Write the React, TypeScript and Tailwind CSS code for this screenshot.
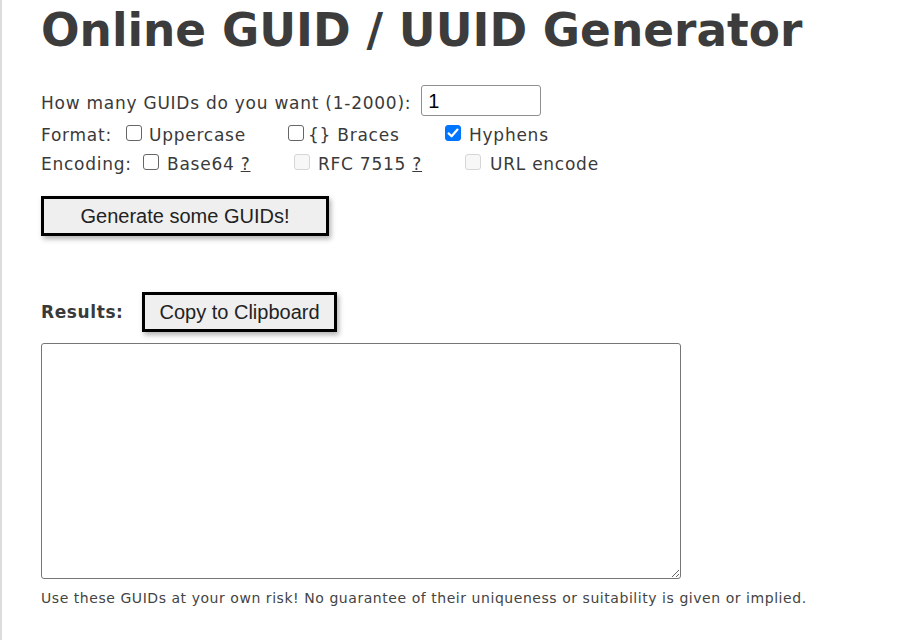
import React, { useState } from "react";

const font = "font-['Verdana','DejaVu_Sans',sans-serif]";

interface BoxProps {
  checked?: boolean;
  disabled?: boolean;
  onChange?: (value: boolean) => void;
  className?: string;
}

const Box: React.FC<BoxProps> = ({ checked = false, disabled = false, onChange, className = "" }) => (
  <span className={`relative inline-flex w-[16px] h-[16px] shrink-0 -mt-[4px] ${className}`}>
    <input
      type="checkbox"
      checked={checked}
      disabled={disabled}
      onChange={(e) => onChange?.(e.target.checked)}
      className={`appearance-none m-0 w-[16px] h-[16px] rounded-[3px] border ${
        disabled
          ? "border-[#d6d6d6] bg-[#f7f7f7]"
          : checked
          ? "border-[#0075ff] bg-[#0075ff]"
          : "border-[#666] bg-white"
      }`}
    />
    {checked && (
      <svg
        viewBox="0 0 16 16"
        className="absolute inset-0 w-[16px] h-[16px] pointer-events-none"
      >
        <path d="M3.6 8.4 L6.6 11.3 L12.5 4.6" fill="none" stroke="white" strokeWidth="2.2" strokeLinecap="round" strokeLinejoin="round" />
      </svg>
    )}
  </span>
);

const App: React.FC = () => {
  const [count, setCount] = useState<string>("1");
  const [uppercase, setUppercase] = useState<boolean>(false);
  const [braces, setBraces] = useState<boolean>(false);
  const [hyphens, setHyphens] = useState<boolean>(true);
  const [base64, setBase64] = useState<boolean>(false);

  return (
    <div className="min-h-[640px] w-[909px] bg-white border-l-2 border-[#dcdcdc] text-[#3a3a3a]">
      <div className={`pl-[39px] ${font}`}>
        <h1 className="text-[45.4px] font-bold leading-[62px] text-[#3c3c3c]">
          Online GUID / UUID Generator
        </h1>

        <div className="mt-[23px] text-[17px] leading-[20px] tracking-[0.75px]">
          <div className="flex items-center h-[31px]">
            <span className="pt-[4px]">How many GUIDs do you want (1-2000):</span>
            <input
              type="text"
              value={count}
              onChange={(e) => setCount(e.target.value)}
              className="ml-[10px] w-[120px] h-[31px] border border-[#8f8f8f] rounded-[3px] px-[6px] pt-[2px] text-[20px] tracking-normal font-['Liberation_Sans',sans-serif] text-black"
            />
          </div>
          <div className="flex items-center h-[32px] mt-[3px]">
            <span className="w-[85px]">Format:</span>
            <Box checked={uppercase} onChange={setUppercase} className="mr-[7px]" />
            <span className="w-[139px]">Uppercase</span>
            <Box checked={braces} onChange={setBraces} className="mr-[4px]" />
            <span className="w-[137px]">{"{}"} Braces</span>
            <Box checked={hyphens} onChange={setHyphens} className="mr-[8px]" />
            <span>Hyphens</span>
          </div>
          <div className="flex items-center h-[26px]">
            <span className="w-[102px]">Encoding:</span>
            <Box checked={base64} onChange={setBase64} className="mr-[8px]" />
            <span className="w-[127px]">
              Base64 <span className="underline">?</span>
            </span>
            <Box disabled className="mr-[8px]" />
            <span className="w-[147px]">
              RFC 7515 <span className="underline">?</span>
            </span>
            <Box disabled className="mr-[9px]" />
            <span>URL encode</span>
          </div>
        </div>

        <button
          type="button"
          className="mt-[19px] w-[288px] h-[40px] border-[3px] border-black bg-[#efefef] shadow-[2px_3px_5px_rgba(0,0,0,0.3)] text-[20px] font-['Liberation_Sans',sans-serif] text-[#222]"
        >
          Generate some GUIDs!
        </button>

        <div className="mt-[56px] flex items-center">
          <span className="font-bold text-[17px] tracking-[0.6px] w-[101px] pt-[2px]">Results:</span>
          <button
            type="button"
            className="w-[195px] h-[40px] border-[3px] border-black bg-[#efefef] shadow-[2px_3px_5px_rgba(0,0,0,0.3)] text-[20px] font-['Liberation_Sans',sans-serif] text-[#222]"
          >
            Copy to Clipboard
          </button>
        </div>

        <textarea
          className="block mt-[11px] w-[640px] h-[236px] border border-[#767676] rounded-[3px]"
          readOnly
        />

        <p className="mt-[9px] text-[14px] tracking-[0.55px] text-[#444]">
          Use these GUIDs at your own risk! No guarantee of their uniqueness or suitability is given or implied.
        </p>
      </div>
    </div>
  );
};

export default App;
